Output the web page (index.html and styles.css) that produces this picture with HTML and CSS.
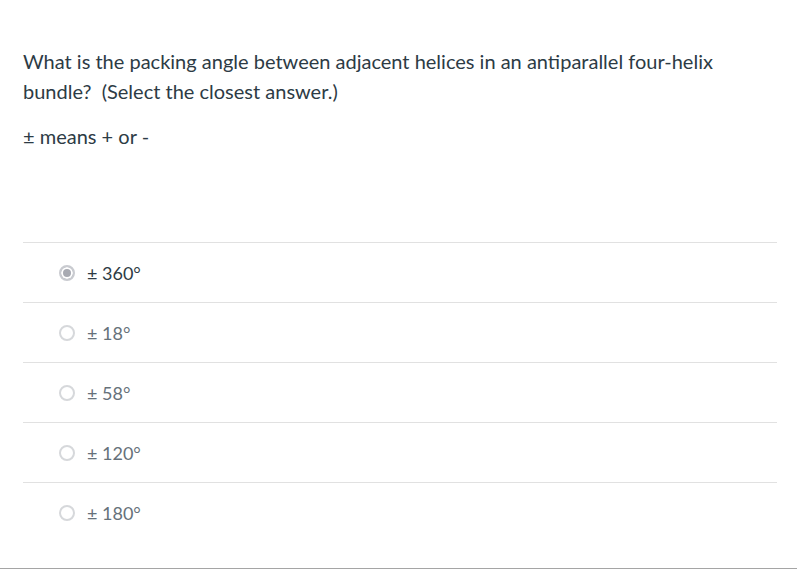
FILE: index.html
```html
<!DOCTYPE html>
<html>
<head>
<meta charset="utf-8">
<link rel="stylesheet" href="styles.css">
</head>
<body>
<div class="question">
  <div class="text">
    <p class="q">What is the packing angle between adjacent helices in an antiparallel four-helix bundle?&nbsp; (Select the closest answer.)</p>
    <p class="note">± means + or -</p>
  </div>
  <div class="answers">
    <div class="answer selected"><span class="radio"></span><span class="label">± 360°</span></div>
    <div class="answer"><span class="radio"></span><span class="label">± 18°</span></div>
    <div class="answer"><span class="radio"></span><span class="label">± 58°</span></div>
    <div class="answer"><span class="radio"></span><span class="label">± 120°</span></div>
    <div class="answer"><span class="radio"></span><span class="label">± 180°</span></div>
  </div>
</div>
</body>
</html>
```

FILE: styles.css
```css
html, body {
  margin: 0;
  padding: 0;
  background: #fff;
}
body {
  font-family: Lato, "Helvetica Neue", Arial, sans-serif;
  color: #2d3b45;
}
.question {
  height: 569px;
  border-bottom: 1px solid #a5a5a5;
  box-sizing: border-box;
  padding: 0 20px 0 23px;
}
.text {
  padding-top: 46px;
  height: 242px;
  box-sizing: border-box;
}
.q {
  margin: 0;
  font-size: 20px;
  line-height: 30px;
}
.note {
  margin: 15px 0 0;
  font-size: 20px;
  line-height: 30px;
}
.answers {
  border-top: 1px solid #e1e1e1;
}
.answer {
  height: 60px;
  display: flex;
  align-items: center;
  padding-left: 36px;
  border-bottom: 1px solid #e1e1e1;
  box-sizing: border-box;
}
.answer:last-child {
  border-bottom: none;
}
.radio {
  width: 16px;
  height: 16px;
  box-sizing: border-box;
  border: 2px solid #d6d8db;
  border-radius: 50%;
  background: #fff;
  margin-right: 12px;
}
.selected .radio {
  border: 2px solid #c9cbd0;
  background: #a8aab2;
  box-shadow: inset 0 0 0 2px #fff;
}
.label {
  font-size: 18px;
  color: #66717a;
  line-height: 22px;
}
.selected .label {
  color: #2d3b45;
}
```
